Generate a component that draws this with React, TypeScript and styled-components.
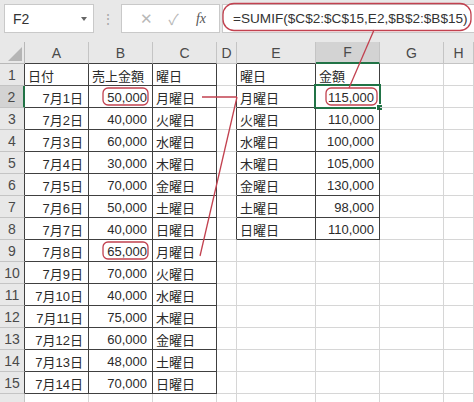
import React from "react"
import styled, { createGlobalStyle, css } from "styled-components"

const GlobalStyle = createGlobalStyle`
  html, body {
    margin: 0;
    padding: 0;
    background: #ffffff;
  }
  body {
    font-family: "Liberation Sans", "Noto Sans CJK JP", sans-serif;
  }
`

const DARK = "#404040"
const GRID = "#d6d6d6"
const RED = "#c2414f"

const Frame = styled.div`
  position: relative;
  width: 474px;
  height: 402px;
  overflow: hidden;
  background: #fff;
`

const FormulaBar = styled.div`
  display: flex;
  align-items: flex-start;
  height: 42px;
  box-sizing: border-box;
  padding: 4px 0 0 4px;
  background: #e8e8e8;
`

const Box = styled.div`
  display: flex;
  align-items: center;
  height: 29px;
  box-sizing: border-box;
  background: #fff;
  border: 1px solid #c9c9c9;
`

const NameBox = styled(Box)`
  width: 90px;
  padding: 0 6px 0 8px;
  justify-content: space-between;
  font-size: 14px;
  color: #333;
`

const Caret = styled.span`
  width: 0;
  height: 0;
  border-left: 3.5px solid transparent;
  border-right: 3.5px solid transparent;
  border-top: 4px solid #666;
`

const Grip = styled.div`
  width: 27px;
  height: 29px;
  display: flex;
  align-items: center;
  justify-content: center;
  color: #a8a8a8;
  font-size: 14px;
`

const FxButtons = styled(Box)`
  width: 99px;
  padding: 0 6px 0 12px;
  justify-content: space-between;
`

const FxIcon = styled.span<{ $dim?: boolean }>`
  width: 24px;
  text-align: center;
  color: ${p => (p.$dim ? "#b8b8b8" : "#555")};
  font-size: 15px;
  ${p =>
    !p.$dim &&
    css`
      font-family: "Liberation Serif", serif;
      font-style: italic;
      font-size: 14px;
    `}
`

const FormulaBox = styled(Box)`
  flex: 1;
  margin-left: 2px;
  padding-left: 10px;
  border-right: none;
  font-size: 13.6px;
  color: #333;
  white-space: nowrap;
`

const COLS = ["A", "B", "C", "D", "E", "F", "G", "H"]

const Sheet = styled.div`
  display: grid;
  grid-template-columns: 25px 64px 64px 64px 20px 79px 64px 64px 30px;
  grid-auto-rows: 22px;
  font-size: 13px;
`

const Corner = styled.div`
  position: relative;
  background: #e8e8e8;
  border-right: 1px solid #b8b8b8;
  border-bottom: 1px solid #b8b8b8;
  box-sizing: border-box;

  &::after {
    content: "";
    position: absolute;
    right: 2px;
    bottom: 2px;
    border-left: 14px solid transparent;
    border-bottom: 14px solid #b5b5b5;
  }
`

const Head = styled.div<{ $active?: boolean; $dark?: boolean; $side?: boolean }>`
  display: flex;
  align-items: center;
  justify-content: center;
  box-sizing: border-box;
  background: ${p => (p.$active ? "#d3d3d3" : "#e8e8e8")};
  color: #4a4a4a;
  font-size: 14px;
  border-right: 1px solid #c4c4c4;
  border-bottom: 1px solid #c4c4c4;
  ${p =>
    p.$side
      ? css`
          border-right-color: ${p.$dark ? DARK : "#c4c4c4"};
          ${p.$active && css`border-right: 2px solid #217346;`}
        `
      : css`
          border-bottom-color: ${p.$dark ? DARK : "#c4c4c4"};
          ${p.$active && css`border-bottom: 2px solid #217346;`}
        `}
`

const Cell = styled.div<{ $num?: boolean; $r?: boolean; $b?: boolean }>`
  position: relative;
  display: flex;
  align-items: center;
  justify-content: ${p => (p.$num ? "flex-end" : "flex-start")};
  box-sizing: border-box;
  padding: 1px 5px 0 3px;
  color: #2a2a2a;
  white-space: nowrap;
  border-right: 1px solid ${p => (p.$r ? DARK : GRID)};
  border-bottom: 1px solid ${p => (p.$b ? DARK : GRID)};
`

const Selection = styled.div`
  position: absolute;
  left: -2px;
  top: -2px;
  right: -2px;
  bottom: -2px;
  border: 2px solid #217346;
  pointer-events: none;
`

const FillHandle = styled.div`
  position: absolute;
  right: -4px;
  bottom: -4px;
  width: 5px;
  height: 5px;
  background: #217346;
  border: 1px solid #fff;
`

const Overlay = styled.svg`
  position: absolute;
  left: 0;
  top: 0;
  pointer-events: none;
`

const DAYS = ["月", "火", "水", "木", "金", "土", "日"]
const SALES = [50000, 40000, 60000, 30000, 70000, 50000, 40000, 65000, 70000, 40000, 75000, 60000, 48000, 70000]
const TOTALS = [115000, 110000, 100000, 105000, 130000, 98000, 110000]

const fmt = (n: number) => n.toLocaleString("en-US")

const bordered = (r: number, c: number) =>
  (r >= 1 && r <= 15 && c >= 0 && c <= 2) || (r >= 1 && r <= 8 && (c === 4 || c === 5))

const cellValue = (r: number, c: number): { text: string; num?: boolean } => {
  if (r === 1) {
    return { text: ["日付", "売上金額", "曜日", "", "曜日", "金額", "", ""][c] }
  }
  const i = r - 2
  if (i < 14) {
    if (c === 0) return { text: `7月${i + 1}日`, num: true }
    if (c === 1) return { text: fmt(SALES[i]), num: true }
    if (c === 2) return { text: `${DAYS[i % 7]}曜日` }
  }
  if (i < 7) {
    if (c === 4) return { text: `${DAYS[i]}曜日` }
    if (c === 5) return { text: fmt(TOTALS[i]), num: true }
  }
  return { text: "" }
}

// row 16 only peeks in at the bottom edge, so its number stays out of view
const ROWS = Array.from({ length: 16 }, (_, i) => i + 1)

const Annotations = () => (
  <Overlay width={474} height={402} viewBox="0 0 474 402">
    <g fill="none" stroke={RED} strokeWidth={1.3}>
      <rect x={223} y={3.5} width={248} height={27} rx={11} />
      <rect x={103} y={88} width={45} height={17} rx={5} />
      <rect x={103} y={242} width={45} height={17} rx={5} />
      <rect x={326} y={88} width={51} height={17} rx={5} />
      <line x1={202} y1={97} x2={237} y2={97} />
      <line x1={237} y1={97} x2={200} y2={256} />
      <line x1={374} y1={30} x2={349} y2={88} />
    </g>
  </Overlay>
)

const App = () => {
  return (
    <Frame>
      <GlobalStyle />
      <FormulaBar>
        <NameBox>
          F2
          <Caret />
        </NameBox>
        <Grip>⋮</Grip>
        <FxButtons>
          <FxIcon $dim>✕</FxIcon>
          <FxIcon $dim>✓</FxIcon>
          <FxIcon>fx</FxIcon>
        </FxButtons>
        <FormulaBox>=SUMIF($C$2:$C$15,E2,$B$2:$B$15)</FormulaBox>
      </FormulaBar>
      <Sheet>
        <Corner />
        {COLS.map((col, c) => (
          <Head key={col} $active={col === "F"} $dark={bordered(1, c)}>
            {col}
          </Head>
        ))}
        {ROWS.map(r => (
          <React.Fragment key={r}>
            <Head $side $active={r === 2} $dark={bordered(r, 0)}>
              {r < 16 ? r : ""}
            </Head>
            {COLS.map((col, c) => {
              const v = cellValue(r, c)
              const right = bordered(r, c) || bordered(r, c + 1)
              const bottom = bordered(r, c) || bordered(r + 1, c)
              return (
                <Cell key={col} $num={v.num} $r={right} $b={bottom}>
                  {v.text}
                  {r === 2 && col === "F" && (
                    <Selection>
                      <FillHandle />
                    </Selection>
                  )}
                </Cell>
              )
            })}
          </React.Fragment>
        ))}
      </Sheet>
      <Annotations />
    </Frame>
  )
}

export default App
